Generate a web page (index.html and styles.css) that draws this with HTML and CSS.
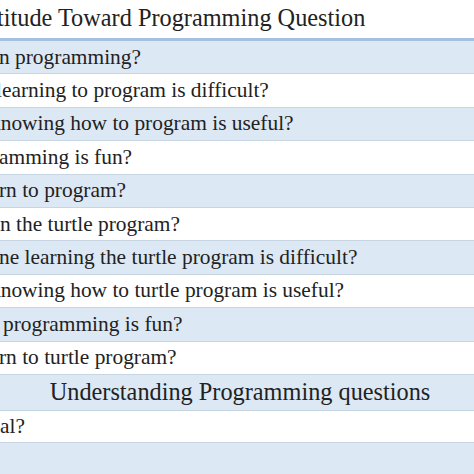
FILE: index.html
```html
<!DOCTYPE html>
<html>
<head>
<meta charset="utf-8">
<link rel="stylesheet" href="styles.css">
</head>
<body>
<div class="table">
  <div class="row title"><span class="txt c3">titude Toward Programming Question</span></div>
  <div class="row blue first"><span class="txt c1">n programming?</span></div>
  <div class="row"><span class="txt c5">learning to program is difficult?</span></div>
  <div class="row blue"><span class="txt c10">knowing how to program is useful?</span></div>
  <div class="row"><span class="txt c1">amming is fun?</span></div>
  <div class="row blue"><span class="txt c1">rn to program?</span></div>
  <div class="row"><span class="txt c0">n the turtle program?</span></div>
  <div class="row blue"><span class="txt c1">ne learning the turtle program is difficult?</span></div>
  <div class="row"><span class="txt c10">knowing how to turtle program is useful?</span></div>
  <div class="row blue"><span class="txt p3">programming is fun?</span></div>
  <div class="row"><span class="txt c1">rn to turtle program?</span></div>
  <div class="row blue section"><span class="txt">Understanding Programming questions</span></div>
  <div class="row short"><span class="txt c0">al?</span></div>
  <div class="row blue"></div>
</div>
</body>
</html>
```
FILE: styles.css
```css
html, body {
  margin: 0;
  padding: 0;
  background: #ffffff;
  overflow: hidden;
}
.table {
  width: 474px;
  display: flex;
  flex-direction: column;
  font-family: "Liberation Serif", "Times New Roman", serif;
  color: #222222;
}
.row {
  height: 32.4px;
  border-bottom: 1px solid #c8d6e4;
  display: flex;
  align-items: center;
  font-size: 21.4px;
  white-space: nowrap;
  overflow: hidden;
  background: #ffffff;
}
.row.blue {
  background: #dde8f5;
}
.row.title {
  border-bottom: 3px solid #a3c1e1;
  font-size: 24.3px;
  padding-bottom: 2px;
  box-sizing: border-box;
  height: 41px;
}
.row.section {
  height: 35px;
  font-size: 24.3px;
  justify-content: center;
  padding-left: 6px;
}
.row.short {
  height: 31px;
}
.txt { display: block; }
.c0 { margin-left: 0; }
.c1 { margin-left: -1px; }
.c3 { margin-left: -3px; }
.c5 { margin-left: -4px; }
.c10 { margin-left: -10px; }
.p3 { margin-left: 3px; }
```
